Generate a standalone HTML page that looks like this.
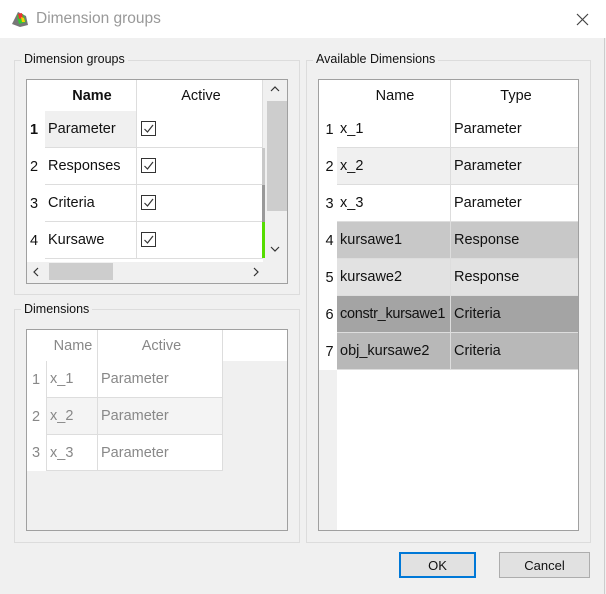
<!DOCTYPE html>
<html><head><style>
*{margin:0;padding:0;box-sizing:border-box}
body{width:606px;height:594px;overflow:hidden;background:#f0f0f0;font-family:"Liberation Sans",sans-serif;font-size:14.5px;color:#111;position:relative}
.a{position:absolute}
.title{left:0;top:0;width:606px;height:38px;background:#fff}
.grp{border:1px solid #dcdcdc}
.lbl{background:#f0f0f0;padding:0 3px;font-size:12.5px}
.tbl{background:#fff;border:1px solid #a0a0a0;overflow:hidden}
.c{position:absolute;display:flex;align-items:center;white-space:nowrap;overflow:hidden;padding-left:3px}
.cb{position:absolute;width:15px;height:15px;border:1px solid #333;background:#fff}
.cb svg{position:absolute;left:1px;top:1px}
</style></head><body>
<div class="a title"></div>
<svg class="a" style="left:10px;top:10px" width="20" height="18" viewBox="0 0 20 18"><path d="M2 14 L8 2 L16 6 L18 15 L10 17Z" fill="#777"/><path d="M7 5 L13 4 L16 12 L9 14Z" fill="#3c3"/><path d="M8 4 L12 3 L13 8 L9 9Z" fill="#e33"/><path d="M11 7 L14 8 L15 12 L12 12Z" fill="#fc0"/></svg>
<div class="a" style="left:36px;top:10px;font-size:15.5px;color:#999">Dimension groups</div>
<svg class="a" style="left:576px;top:13px" width="13" height="13"><path d="M1 1L12 12M12 1L1 12" stroke="#444" stroke-width="1.2"/></svg>
<div class="a" style="right:1px;top:38px;width:1px;height:556px;background:#ccc"></div>

<div class="a grp" style="left:14px;top:60px;width:286px;height:235px"></div>
<div class="a lbl" style="left:21px;top:52px">Dimension groups</div>
<div class="a tbl" style="left:26px;top:79px;width:262px;height:205px">
 <div class="a" style="left:0;top:0;width:236px;height:182px;background:#fff"></div>
 <div class="c" style="left:18px;top:0;width:92px;height:31px;justify-content:center;font-weight:bold;border-right:1px solid #ddd">Name</div>
 <div class="c" style="left:110px;top:0;width:126px;height:31px;justify-content:center;border-right:1px solid #ddd">Active</div>
 <div class="c" style="left:0;top:31px;width:18px;height:37px;font-weight:bold">1</div>
 <div class="c" style="left:18px;top:31px;width:92px;height:37px;background:#f0f0f0;border-right:1px solid #ddd;border-bottom:1px solid #ddd">Parameter</div>
 <div class="c" style="left:0;top:68px;width:18px;height:37px">2</div>
 <div class="c" style="left:18px;top:68px;width:92px;height:37px;border-right:1px solid #ddd;border-bottom:1px solid #ddd">Responses</div>
 <div class="c" style="left:0;top:105px;width:18px;height:37px">3</div>
 <div class="c" style="left:18px;top:105px;width:92px;height:37px;border-right:1px solid #ddd;border-bottom:1px solid #ddd">Criteria</div>
 <div class="c" style="left:0;top:142px;width:18px;height:37px">4</div>
 <div class="c" style="left:18px;top:142px;width:92px;height:37px;border-right:1px solid #ddd;border-bottom:1px solid #ddd">Kursawe</div>
 <div class="a" style="left:110px;top:31px;width:126px;height:148px;border-right:1px solid #ddd"></div>
 <div class="a" style="left:110px;top:67px;width:126px;height:1px;background:#ddd"></div>
 <div class="a" style="left:110px;top:104px;width:126px;height:1px;background:#ddd"></div>
 <div class="a" style="left:110px;top:141px;width:126px;height:1px;background:#ddd"></div>
 <div class="a" style="left:110px;top:178px;width:126px;height:1px;background:#ddd"></div>
 <div class="cb" style="left:114px;top:41px"><svg width="11" height="11"><path d="M1.5 6L4.5 9L10 2" fill="none" stroke="#333" stroke-width="1.2"/></svg></div>
 <div class="cb" style="left:114px;top:78px"><svg width="11" height="11"><path d="M1.5 6L4.5 9L10 2" fill="none" stroke="#333" stroke-width="1.2"/></svg></div>
 <div class="cb" style="left:114px;top:115px"><svg width="11" height="11"><path d="M1.5 6L4.5 9L10 2" fill="none" stroke="#333" stroke-width="1.2"/></svg></div>
 <div class="cb" style="left:114px;top:152px"><svg width="11" height="11"><path d="M1.5 6L4.5 9L10 2" fill="none" stroke="#333" stroke-width="1.2"/></svg></div>
 <div class="a" style="left:236px;top:0;width:24px;height:182px;background:#f0f0f0"></div>
 <div class="a" style="left:240px;top:21px;width:20px;height:110px;background:#cdcdcd"></div>
 <div class="a" style="left:235px;top:68px;width:3px;height:37px;background:#c8c8c8"></div>
 <div class="a" style="left:235px;top:105px;width:3px;height:37px;background:#999"></div>
 <div class="a" style="left:235px;top:142px;width:3px;height:36px;background:#55dd00"></div>
 <svg class="a" style="left:243px;top:6px" width="10" height="6"><path d="M1 5L5 1L9 5" fill="none" stroke="#333" stroke-width="1.2"/></svg>
 <svg class="a" style="left:243px;top:166px" width="10" height="6"><path d="M1 1L5 5L9 1" fill="none" stroke="#333" stroke-width="1.2"/></svg>
 <div class="a" style="left:0;top:182px;width:260px;height:21px;background:#f0f0f0"></div>
 <div class="a" style="left:22px;top:183px;width:64px;height:17px;background:#cdcdcd"></div>
 <svg class="a" style="left:6px;top:187px" width="6" height="10"><path d="M5 1L1 5L5 9" fill="none" stroke="#333" stroke-width="1.2"/></svg>
 <svg class="a" style="left:226px;top:187px" width="6" height="10"><path d="M1 1L5 5L1 9" fill="none" stroke="#333" stroke-width="1.2"/></svg>
</div>

<div class="a grp" style="left:14px;top:309px;width:286px;height:234px"></div>
<div class="a lbl" style="left:21px;top:302px">Dimensions</div>
<div class="a tbl" style="left:26px;top:329px;width:262px;height:202px;background:#f0f0f0;color:#888">
 <div class="a" style="left:0;top:0;width:260px;height:31px;background:#fff"></div>
 <div class="a" style="left:0;top:31px;width:19px;height:110px;background:#fff"></div>
 <div class="c" style="left:19px;top:0;width:52px;height:31px;justify-content:center;border-right:1px solid #ddd">Name</div>
 <div class="c" style="left:71px;top:0;width:125px;height:31px;justify-content:center;border-right:1px solid #ddd">Active</div>
 <div class="c" style="left:2px;top:31px;width:17px;height:37px">1</div>
 <div class="c" style="left:19px;top:31px;width:52px;height:37px;background:#fff;border:1px solid #ddd;border-top:0">x_1</div>
 <div class="c" style="left:71px;top:31px;width:125px;height:37px;background:#fff;border-right:1px solid #ddd;border-bottom:1px solid #ddd">Parameter</div>
 <div class="c" style="left:2px;top:68px;width:17px;height:37px">2</div>
 <div class="c" style="left:19px;top:68px;width:52px;height:37px;background:#f4f4f4;border:1px solid #ddd;border-top:0">x_2</div>
 <div class="c" style="left:71px;top:68px;width:125px;height:37px;background:#f4f4f4;border-right:1px solid #ddd;border-bottom:1px solid #ddd">Parameter</div>
 <div class="c" style="left:2px;top:105px;width:17px;height:36px">3</div>
 <div class="c" style="left:19px;top:105px;width:52px;height:36px;background:#fff;border:1px solid #ddd;border-top:0">x_3</div>
 <div class="c" style="left:71px;top:105px;width:125px;height:36px;background:#fff;border-right:1px solid #ddd;border-bottom:1px solid #ddd">Parameter</div>
</div>

<div class="a grp" style="left:306px;top:60px;width:285px;height:483px"></div>
<div class="a lbl" style="left:313px;top:52px">Available Dimensions</div>
<div class="a tbl" style="left:318px;top:79px;width:261px;height:452px">
 <div class="a" style="left:0;top:290px;width:18px;height:162px;background:#f0f0f0"></div>
 <div class="c" style="left:18px;top:0;width:114px;height:31px;justify-content:center;border-right:1px solid #ddd">Name</div>
 <div class="c" style="left:132px;top:0;width:127px;height:31px;justify-content:center">Type</div>
 <div class="c" style="left:0;top:31px;width:18px;height:37px;justify-content:center">1</div>
 <div class="c" style="left:18px;top:31px;width:114px;height:37px;border-right:1px solid #ddd;border-bottom:1px solid #ddd">x_1</div>
 <div class="c" style="left:132px;top:31px;width:127px;height:37px;border-bottom:1px solid #ddd">Parameter</div>
 <div class="c" style="left:0;top:68px;width:18px;height:37px;justify-content:center">2</div>
 <div class="c" style="left:18px;top:68px;width:114px;height:37px;background:#f0f0f0;border-right:1px solid #ddd;border-bottom:1px solid #ddd">x_2</div>
 <div class="c" style="left:132px;top:68px;width:127px;height:37px;background:#f0f0f0;border-bottom:1px solid #ddd">Parameter</div>
 <div class="c" style="left:0;top:105px;width:18px;height:37px;justify-content:center">3</div>
 <div class="c" style="left:18px;top:105px;width:114px;height:37px;border-right:1px solid #ddd;border-bottom:1px solid #ddd">x_3</div>
 <div class="c" style="left:132px;top:105px;width:127px;height:37px;border-bottom:1px solid #ddd">Parameter</div>
 <div class="c" style="left:0;top:142px;width:18px;height:37px;justify-content:center">4</div>
 <div class="c" style="left:18px;top:142px;width:114px;height:37px;background:#c8c8c8;border-right:1px solid #ddd;border-bottom:1px solid #ddd">kursawe1</div>
 <div class="c" style="left:132px;top:142px;width:127px;height:37px;background:#c8c8c8;border-bottom:1px solid #ddd">Response</div>
 <div class="c" style="left:0;top:179px;width:18px;height:37px;justify-content:center">5</div>
 <div class="c" style="left:18px;top:179px;width:114px;height:37px;background:#e2e2e2;border-right:1px solid #ddd;border-bottom:1px solid #ddd">kursawe2</div>
 <div class="c" style="left:132px;top:179px;width:127px;height:37px;background:#e2e2e2;border-bottom:1px solid #ddd">Response</div>
 <div class="c" style="left:0;top:216px;width:18px;height:37px;justify-content:center">6</div>
 <div class="c" style="left:18px;top:216px;width:114px;height:37px;background:#a4a4a4;border-right:1px solid #ddd;border-bottom:1px solid #ddd;letter-spacing:-0.3px">constr_kursawe1</div>
 <div class="c" style="left:132px;top:216px;width:127px;height:37px;background:#a4a4a4;border-bottom:1px solid #ddd">Criteria</div>
 <div class="c" style="left:0;top:253px;width:18px;height:37px;justify-content:center">7</div>
 <div class="c" style="left:18px;top:253px;width:114px;height:37px;background:#b8b8b8;border-right:1px solid #ddd;border-bottom:1px solid #ddd">obj_kursawe2</div>
 <div class="c" style="left:132px;top:253px;width:127px;height:37px;background:#b8b8b8;border-bottom:1px solid #ddd">Criteria</div>
</div>

<div class="a" style="left:399px;top:552px;width:77px;height:26px;border:2px solid #0078d7;background:#e1e1e1;display:flex;align-items:center;justify-content:center;font-size:13px">OK</div>
<div class="a" style="left:499px;top:552px;width:91px;height:26px;border:1px solid #adadad;background:#e1e1e1;display:flex;align-items:center;justify-content:center;font-size:13px">Cancel</div>
</body></html>
